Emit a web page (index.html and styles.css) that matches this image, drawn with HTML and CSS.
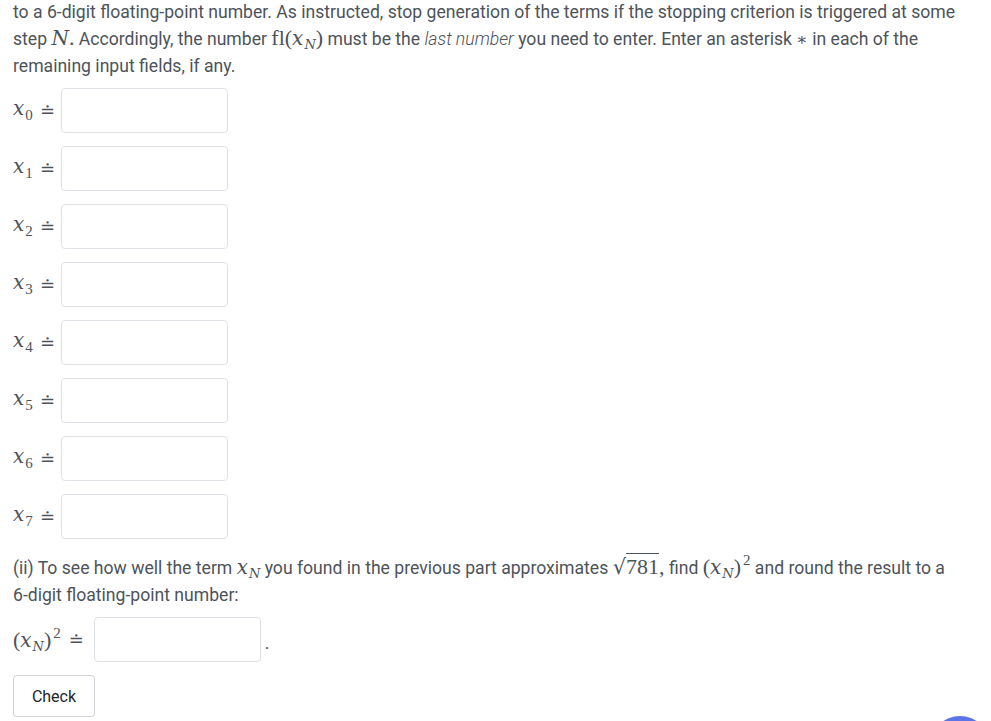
FILE: index.html
```html
<!DOCTYPE html>
<html>
<head>
<meta charset="utf-8">
<link rel="stylesheet" href="styles.css">
</head>
<body>
<div class="page">
  <p class="text intro">to a 6-digit floating-point number. As instructed, stop generation of the terms if the stopping criterion is triggered at some step <span class="m">N</span><span class="mr">.</span> Accordingly, the number <span class="mr">fl(</span><span class="m">x</span><sub class="sb">N</sub><span class="mr">)</span> must be the <em class="em">last number</em> you need to enter. Enter an asterisk <span class="mr ast">∗</span> in each of the remaining input fields, if any.</p>

  <div class="rows">
    <div class="row"><span class="lbl"><span class="m">x</span><sub class="sn">0</sub></span><span class="rel">≐</span><input class="field" type="text"></div>
    <div class="row"><span class="lbl"><span class="m">x</span><sub class="sn">1</sub></span><span class="rel">≐</span><input class="field" type="text"></div>
    <div class="row"><span class="lbl"><span class="m">x</span><sub class="sn">2</sub></span><span class="rel">≐</span><input class="field" type="text"></div>
    <div class="row"><span class="lbl"><span class="m">x</span><sub class="sn">3</sub></span><span class="rel">≐</span><input class="field" type="text"></div>
    <div class="row"><span class="lbl"><span class="m">x</span><sub class="sn">4</sub></span><span class="rel">≐</span><input class="field" type="text"></div>
    <div class="row"><span class="lbl"><span class="m">x</span><sub class="sn">5</sub></span><span class="rel">≐</span><input class="field" type="text"></div>
    <div class="row"><span class="lbl"><span class="m">x</span><sub class="sn">6</sub></span><span class="rel">≐</span><input class="field" type="text"></div>
    <div class="row"><span class="lbl"><span class="m">x</span><sub class="sn">7</sub></span><span class="rel">≐</span><input class="field" type="text"></div>
  </div>

  <p class="text part">(ii) To see how well the term <span class="m">x</span><sub class="sb">N</sub> you found in the previous part approximates <span class="mr root">√</span><span class="mr rad">781</span><span class="mr">,</span> find <span class="mr">(</span><span class="m">x</span><sub class="sb">N</sub><span class="mr">)</span><sup class="sp">2</sup> and round the result to a <span class="nowrap">6-digit</span> floating-point number:</p>

  <div class="row final"><span class="lbl lbl-wide"><span class="mr">(</span><span class="m">x</span><sub class="sb">N</sub><span class="mr">)</span><sup class="sp">2</sup></span><span class="rel rel-wide">≐</span><input class="field" type="text"><span class="period">.</span></div>

  <button class="check" type="button">Check</button>
</div>
<div class="fab"></div>
</body>
</html>
```

FILE: styles.css
```css
html, body {
  margin: 0;
  padding: 0;
  background: #ffffff;
}

body {
  font-family: Roboto, "Liberation Sans", sans-serif;
  font-size: 17.6px;
  color: #4d535a;
  overflow: hidden;
}

.page {
  padding: 0 20px 0 13px;
  margin-top: -1px;
}

.text {
  margin: 0;
  line-height: 27px;
}

.nowrap {
  white-space: nowrap;
}

.m {
  font-family: "DejaVu Serif", serif;
  font-style: italic;
  font-size: 20px;
  line-height: 1;
}

.mr {
  font-family: "Liberation Serif", serif;
  font-size: 22px;
  line-height: 1;
}

.root {
  font-family: "DejaVu Serif", serif;
  font-size: 21px;
}

.ast {
  font-family: "DejaVu Serif", serif;
  font-size: 17px;
}

.rad {
  border-top: 1px solid currentColor;
  padding-top: 0;
}

.sb {
  font-family: "DejaVu Serif", serif;
  font-style: italic;
  font-size: 13px;
  vertical-align: -4px;
  line-height: 1;
  margin-left: 1px;
}

.sn {
  font-family: "Liberation Serif", serif;
  font-size: 15px;
  vertical-align: -5px;
  line-height: 1;
  margin-left: 1px;
}

.sp {
  font-family: "Liberation Serif", serif;
  font-size: 15px;
  vertical-align: 9px;
  line-height: 1;
  margin-left: 2px;
}

.em {
  font-style: italic;
  font-weight: 300;
}

.rows {
  display: flex;
  flex-direction: column;
  gap: 13px;
  margin-top: 8px;
}

.row {
  display: flex;
  align-items: center;
}

.lbl {
  width: 27px;
  color: #4d535a;
  line-height: 1;
}

.lbl-wide {
  width: auto;
}

.rel {
  font-family: "DejaVu Serif", serif;
  font-size: 18px;
  width: 21px;
  color: #4d535a;
  line-height: 1;
}

.rel-wide {
  margin-left: 8px;
  width: 25px;
}

.field {
  box-sizing: border-box;
  width: 167px;
  height: 45px;
  border: 1px solid #dee2e6;
  border-radius: 4px;
  background: #fff;
  margin: 0;
  padding: 0 10px;
  font: inherit;
}

.part {
  margin-top: 14px;
}

.final {
  margin-top: 8px;
}

.period {
  margin-left: 4px;
  padding-top: 6px;
  color: #4d535a;
}

.check {
  display: block;
  margin-top: 13px;
  width: 82px;
  height: 42px;
  border: 1px solid #cfd3d7;
  border-radius: 4px;
  background: #ffffff;
  color: #212529;
  font-family: Roboto, "Liberation Sans", sans-serif;
  font-size: 16px;
  padding: 0;
  box-shadow: 0 1px 1px rgba(0,0,0,0.06);
}

.fab {
  position: fixed;
  left: 930px;
  top: 716px;
  width: 60px;
  height: 60px;
  border-radius: 50%;
  background: #5c74e6;
}
```
